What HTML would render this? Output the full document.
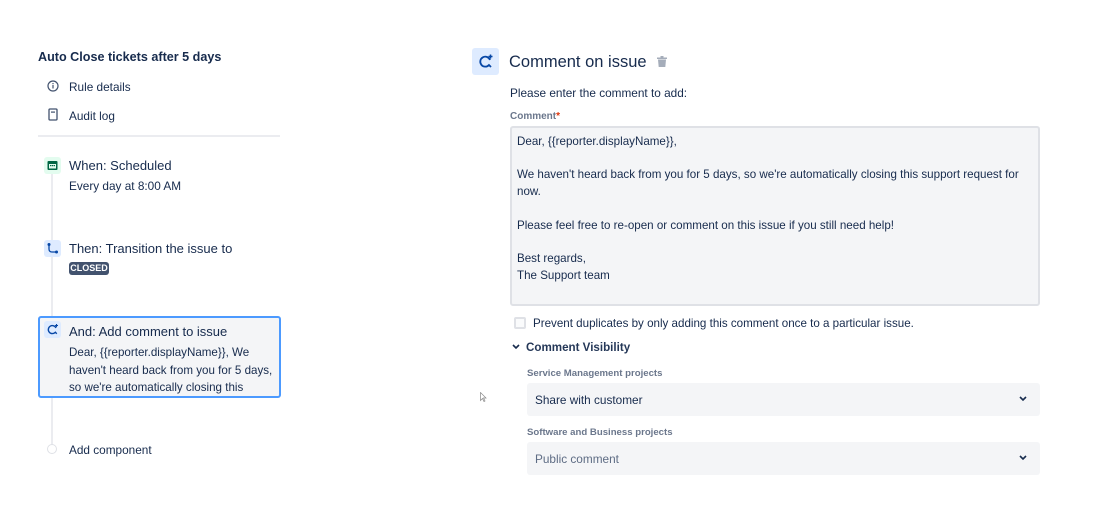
<!DOCTYPE html>
<html><head><style>
*{box-sizing:border-box;margin:0;padding:0}
body{width:1100px;height:526px;background:#fff;font-family:"Liberation Sans",sans-serif;color:#172b4d;position:relative;overflow:hidden}
.a{position:absolute;white-space:nowrap}
.t12{font-size:11.8px}
.ib{position:absolute;width:17px;height:17px;border-radius:3px}
</style></head><body>
<div class="a" style="left:38px;top:50px;font-size:12.6px;font-weight:bold">Auto Close tickets after 5 days</div>
<svg class="a" style="left:47px;top:80px" width="12" height="12" viewBox="0 0 12 12"><circle cx="6" cy="6" r="5" fill="none" stroke="#42526e" stroke-width="1.2"/><rect x="5.4" y="5" width="1.2" height="3.5" fill="#42526e"/><rect x="5.4" y="3" width="1.2" height="1.2" fill="#42526e"/></svg>
<div class="a t12" style="left:69px;top:80px">Rule details</div>
<svg class="a" style="left:48px;top:108px" width="10" height="13" viewBox="0 0 10 13"><rect x="1" y="1" width="8" height="11" rx="1" fill="none" stroke="#42526e" stroke-width="1.3"/><rect x="3" y="3.5" width="4" height="1.2" fill="#42526e"/></svg>
<div class="a t12" style="left:69px;top:109px">Audit log</div>
<div class="a" style="left:38px;top:135px;width:242px;height:2px;background:#ebecf0"></div>
<div class="a" style="left:51px;top:172px;width:2px;height:275px;background:#ebecf0"></div>
<div class="ib" style="left:44px;top:157px;background:#e3fcef"></div>
<svg class="a" style="left:47px;top:160px" width="11" height="11" viewBox="0 0 11 11"><rect x="0.5" y="1" width="10" height="9" rx="1" fill="#006644"/><rect x="2" y="4" width="7" height="4.5" fill="#e3fcef"/><rect x="3" y="5" width="1.5" height="1.2" fill="#006644"/><rect x="5" y="5" width="1.5" height="1.2" fill="#006644"/><rect x="7" y="5" width="1" height="1.2" fill="#006644"/></svg>
<div class="a" style="left:69px;top:158px;font-size:13px">When: Scheduled</div>
<div class="a t12" style="left:69px;top:179px">Every day at 8:00 AM</div>
<div class="ib" style="left:44px;top:240px;background:#deebff"></div>
<svg class="a" style="left:46px;top:242px" width="13" height="13" viewBox="0 0 13 13"><path d="M3 2v5q0 3 3 3h4" fill="none" stroke="#0747a6" stroke-width="1.3"/><circle cx="3" cy="2.5" r="1.5" fill="#0747a6"/><circle cx="10.5" cy="10" r="1.5" fill="#0747a6"/></svg>
<div class="a" style="left:69px;top:241px;font-size:13px">Then: Transition the issue to</div>
<div class="a" style="left:69px;top:262px;height:13px;width:40px;background:#42526e;color:#fff;font-size:9px;font-weight:bold;border-radius:3px;text-align:center;line-height:13px">CLOSED</div>
<div class="a" style="left:38px;top:316px;width:243px;height:82px;border:2px solid #4c9aff;border-radius:3px;background:#f4f5f7"></div>
<div class="ib" style="left:44px;top:321px;background:#deebff"></div>
<svg class="a" style="left:46px;top:323px" width="13" height="13" viewBox="0 0 13 13"><path d="M10 5A4 4 0 1 0 9.3 9.3l1.5 1.5" fill="none" stroke="#0747a6" stroke-width="1.4"/><path d="M10.5 1v3M9 2.5h3" stroke="#0747a6" stroke-width="1.1"/></svg>
<div class="a" style="left:69px;top:324px;font-size:13px">And: Add comment to issue</div>
<div class="a t12" style="left:69px;top:344px;line-height:17.5px;font-size:11.6px">Dear, {{reporter.displayName}}, We<br>haven't heard back from you for 5 days,<br>so we're automatically closing this</div>
<div class="a" style="left:47px;top:444px;width:10px;height:10px;border:1.5px solid #dfe1e6;border-radius:50%;background:#fff"></div>
<div class="a t12" style="left:69px;top:443px">Add component</div>

<div class="a" style="left:472px;top:48px;width:27px;height:27px;border-radius:3px;background:#deebff"></div>
<svg class="a" style="left:477px;top:53px" width="17" height="17" viewBox="0 0 17 17"><path d="M13 7A5 5 0 1 0 12 12l2 2" fill="none" stroke="#0747a6" stroke-width="1.8"/><path d="M13.5 1.5v4M11.5 3.5h4" stroke="#0747a6" stroke-width="1.5"/></svg>
<div class="a" style="left:509px;top:53px;font-size:16.5px">Comment on issue</div>
<svg class="a" style="left:657px;top:56px" width="10" height="12" viewBox="0 0 10 12"><rect x="0" y="1.5" width="10" height="1.5" fill="#a5adba"/><rect x="3.5" y="0" width="3" height="1.5" fill="#a5adba"/><path d="M1 3.5h8l-.7 7.5H1.7z" fill="#a5adba"/></svg>
<div class="a t12" style="left:510px;top:86px">Please enter the comment to add:</div>
<div class="a" style="left:510px;top:111px;font-size:10px;font-weight:bold;color:#6b778c">Comment<span style="color:#de350b">*</span></div>
<div class="a" style="left:510px;top:126px;width:530px;height:180px;background:#f4f5f7;border:2px solid #dfe1e6;border-radius:3px"></div>
<div class="a" style="left:517px;top:134px;line-height:16.7px;font-size:11.6px">Dear, {{reporter.displayName}},<br><br>We haven't heard back from you for 5 days, so we're automatically closing this support request for<br>now.<br><br>Please feel free to re-open or comment on this issue if you still need help!<br><br>Best regards,<br>The Support team</div>
<div class="a" style="left:514px;top:317px;width:12px;height:12px;border:2px solid #dfe1e6;border-radius:2px;background:#fafbfc"></div>
<div class="a" style="left:533px;top:317px;font-size:11.6px">Prevent duplicates by only adding this comment once to a particular issue.</div>
<svg class="a" style="left:512px;top:344px" width="8" height="6" viewBox="0 0 8 6"><path d="M1 1l3 3 3-3" fill="none" stroke="#172b4d" stroke-width="1.6"/></svg>
<div class="a" style="left:526px;top:341px;font-weight:bold;color:#253858;font-size:11.6px">Comment Visibility</div>
<div class="a" style="left:527px;top:368px;font-size:9.6px;font-weight:bold;color:#6b778c">Service Management projects</div>
<div class="a" style="left:527px;top:383px;width:513px;height:33px;background:#f4f5f7;border-radius:3px"></div>
<div class="a t12" style="left:535px;top:393px">Share with customer</div>
<svg class="a" style="left:1019px;top:396px" width="8" height="6" viewBox="0 0 8 6"><path d="M1 1l3 3 3-3" fill="none" stroke="#172b4d" stroke-width="1.6"/></svg>
<div class="a" style="left:527px;top:427px;font-size:9.6px;font-weight:bold;color:#6b778c">Software and Business projects</div>
<div class="a" style="left:527px;top:442px;width:513px;height:33px;background:#f4f5f7;border-radius:3px"></div>
<div class="a t12" style="left:535px;top:452px;color:#5e6c84">Public comment</div>
<svg class="a" style="left:1019px;top:455px" width="8" height="6" viewBox="0 0 8 6"><path d="M1 1l3 3 3-3" fill="none" stroke="#172b4d" stroke-width="1.6"/></svg>
<svg class="a" style="left:480px;top:392px" width="8" height="11" viewBox="0 0 8 11"><path d="M.5.5v8l2-2 1.5 3 1-.5-1.5-3h2.5z" fill="#fff" stroke="#888" stroke-width=".7"/></svg>
</body></html>
